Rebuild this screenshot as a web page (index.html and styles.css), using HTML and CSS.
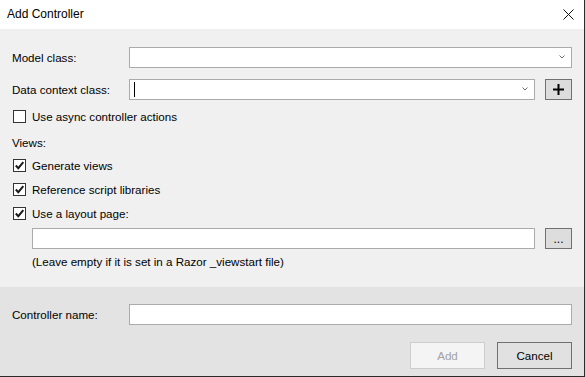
FILE: index.html
```html
<!DOCTYPE html>
<html>
<head>
<meta charset="utf-8">
<link rel="stylesheet" href="styles.css">
</head>
<body>
<div class="dialog">
  <div class="titlebar">
    <span class="title">Add Controller</span>
    <svg class="close" width="11" height="11" viewBox="0 0 11 11"><path d="M0.5 0.5L10.5 10.5M10.5 0.5L0.5 10.5" stroke="#111" stroke-width="1" fill="none"/></svg>
  </div>
  <div class="main">
    <div class="row row-model">
      <label class="lbl">Model class:</label>
      <div class="field combo">
        <svg class="chev" width="6" height="4" viewBox="0 0 6 4"><path d="M0.5 0.5L3 3L5.5 0.5" stroke="#6a6a6a" fill="none"/></svg>
      </div>
    </div>
    <div class="row row-data">
      <label class="lbl">Data context class:</label>
      <div class="field combo"><span class="caret"></span>
        <svg class="chev" width="6" height="4" viewBox="0 0 6 4"><path d="M0.5 0.5L3 3L5.5 0.5" stroke="#6a6a6a" fill="none"/></svg>
      </div>
      <div class="sqbtn"><svg width="11" height="11" viewBox="0 0 11 11"><path d="M5.5 0V11M0 5.5H11" stroke="#000" stroke-width="2"/></svg></div>
    </div>
    <div class="check check-async"><span class="box"></span><span>Use async controller actions</span></div>
    <div class="views-lbl">Views:</div>
    <div class="check check-first"><span class="box on"><svg width="11" height="11" viewBox="0 0 11 11"><path d="M1.8 5.5L4.3 8.2L9.3 2.2" stroke="#1a1a1a" stroke-width="2" fill="none"/></svg></span><span>Generate views</span></div>
    <div class="check"><span class="box on"><svg width="11" height="11" viewBox="0 0 11 11"><path d="M1.8 5.5L4.3 8.2L9.3 2.2" stroke="#1a1a1a" stroke-width="2" fill="none"/></svg></span><span>Reference script libraries</span></div>
    <div class="check"><span class="box on"><svg width="11" height="11" viewBox="0 0 11 11"><path d="M1.8 5.5L4.3 8.2L9.3 2.2" stroke="#1a1a1a" stroke-width="2" fill="none"/></svg></span><span>Use a layout page:</span></div>
    <div class="row row-layout">
      <div class="field"></div>
      <div class="sqbtn dots">...</div>
    </div>
    <div class="hint">(Leave empty if it is set in a Razor _viewstart file)</div>
  </div>
  <div class="footer">
    <div class="row row-name">
      <label class="lbl">Controller name:</label>
      <div class="field"></div>
    </div>
    <div class="buttons">
      <div class="btn disabled">Add</div>
      <div class="btn default">Cancel</div>
    </div>
  </div>
</div>
</body>
</html>
```

FILE: styles.css
```css
html, body {
  margin: 0;
  padding: 0;
  background: #f0f0f0;
}
body {
  font-family: "Liberation Sans", Arial, sans-serif;
  font-size: 11.6px;
  color: #000;
}
.dialog {
  width: 584px;
  height: 376px;
  border-right: 1px solid #2b2b2b;
  border-bottom: 1px solid #2b2b2b;
  display: flex;
  flex-direction: column;
  background: #f0f0f0;
}
.titlebar {
  height: 29px;
  background: #fff;
  display: flex;
  align-items: center;
  justify-content: space-between;
  padding: 0 10px 0 7px;
  flex: none;
}
.title {
  font-size: 12px;
  margin-top: -1px;
}
.close {
  margin-top: -1px;
}
.main {
  height: 258px;
  padding: 18px 12px 0 12px;
  flex: none;
  box-sizing: border-box;
}
.row {
  display: flex;
  align-items: center;
}
.lbl {
  width: 117px;
  flex: none;
}
.field {
  flex: 1;
  height: 21px;
  box-sizing: border-box;
  background: #fff;
  border: 1px solid #ababab;
  position: relative;
}
.combo .chev {
  position: absolute;
  right: 6px;
  top: 7px;
}
.caret {
  position: absolute;
  left: 4px;
  top: 2px;
  width: 1px;
  height: 15px;
  background: #000;
}
.row-data {
  margin-top: 11px;
}
.sqbtn {
  width: 27px;
  height: 21px;
  box-sizing: border-box;
  flex: none;
  margin-left: 10px;
  background: #dddddd;
  border: 1px solid #707070;
  display: flex;
  align-items: center;
  justify-content: center;
}
.dots {
  font-size: 12px;
  line-height: 12px;
  padding-top: 1px;
}
.check {
  display: flex;
  align-items: center;
  height: 13px;
  margin-top: 11px;
  padding-left: 1px;
}
.check-async {
  margin-top: 10px;
}
.check .box {
  width: 13px;
  height: 13px;
  box-sizing: border-box;
  border: 1px solid #333;
  background: #fff;
  margin-right: 6px;
  flex: none;
  display: flex;
  align-items: center;
  justify-content: center;
}
.views-lbl {
  margin-top: 13px;
  height: 14px;
  line-height: 14px;
}
.check-first {
  margin-top: 9px;
}
.row-layout {
  margin-top: 8px;
  padding-left: 20px;
}
.hint {
  margin-top: 6px;
  padding-left: 20px;
}
.footer {
  flex: 1;
  background: #e3e3e3;
  padding: 17px 12px 0 12px;
}
.buttons {
  display: flex;
  justify-content: flex-end;
  gap: 12px;
  margin-top: 17px;
}
.btn {
  width: 75px;
  height: 27px;
  box-sizing: border-box;
  display: flex;
  align-items: center;
  justify-content: center;
}
.btn.disabled {
  background: #f4f4f4;
  border: 1px solid #cdcdcd;
  color: #a3a3a3;
}
.btn.default {
  background: #e1e1e1;
  border: 1px solid #707070;
  color: #000;
}
```
